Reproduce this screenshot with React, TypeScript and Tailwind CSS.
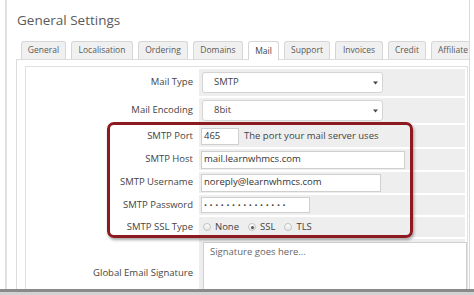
import React from "react";

type Tab = { label: string; w: string; active?: boolean };

const TABS: Tab[] = [
  { label: "General", w: "w-[45px]" },
  { label: "Localisation", w: "w-[62px]" },
  { label: "Ordering", w: "w-[50px]" },
  { label: "Domains", w: "w-[50px]" },
  { label: "Mail", w: "w-[31px]", active: true },
  { label: "Support", w: "w-[46px]" },
  { label: "Invoices", w: "w-[48px]" },
  { label: "Credit", w: "w-[38px]" },
  { label: "Affiliate", w: "w-[44px]" },
];

function Caret() {
  return (
    <svg width="5" height="4" viewBox="0 0 5 4" className="ml-auto mr-[4px]">
      <path d="M0 0.5h5L2.5 3.5z" fill="#444" />
    </svg>
  );
}

function Select({ value }: { value: string }) {
  return (
    <div className="flex h-[21px] w-[181px] items-center rounded-[3px] border border-[#d4d4d4] bg-white pl-[11px] text-[9.5px] text-[#444]">
      <span>{value}</span>
      <Caret />
    </div>
  );
}

function Input({ value, w }: { value: string; w: string }) {
  return (
    <div className={`flex h-[18px] items-center border border-[#cfcfcf] bg-white pl-[2px] text-[9.5px] text-[#333] ${w}`}>
      {value}
    </div>
  );
}

function Radio({ checked }: { checked?: boolean }) {
  return (
    <span className="flex h-[8px] w-[8px] items-center justify-center rounded-full border border-[#c4c4c4] bg-[linear-gradient(#fdfdfd,#e6e6e6)]">
      {checked && <span className="h-[3px] w-[3px] rounded-full bg-[#555]" />}
    </span>
  );
}

function Row({ label, h, children }: { label: string; h: string; children: React.ReactNode }) {
  return (
    <div className={`flex gap-[2px] ${h}`}>
      <div className="flex w-[169px] shrink-0 items-center justify-end bg-white pr-[4px] text-[9.5px] text-[#444]">{label}</div>
      <div className="flex min-w-0 flex-1 items-center bg-[#eeeeee] pl-[3px]">{children}</div>
    </div>
  );
}

export default function App() {
  return (
    <div className="relative h-[295px] w-[474px] overflow-hidden bg-white font-['Open_Sans',sans-serif]">
      <div className="ml-[5px] h-[289px] w-[465px] overflow-hidden border-l-[2px] border-r border-l-[#e0e0e0] border-r-[#dadada]">
        {/* HEADING */}
        <h1 className="pl-[10px] pt-[10px] text-[13.5px] leading-[20px] text-[#5a5a5a]">General Settings</h1>

        {/* TABS */}
        <div className="relative z-10 mt-[11px] flex gap-[5px] pl-[14px]">
          {TABS.map((t) => (
            <div
              key={t.label}
              className={`flex h-[18px] shrink-0 items-center justify-center rounded-t-[3px] border border-b-0 text-[8.5px] ${t.w} ${
                t.active
                  ? "h-[19px] border-[#d6d6d6] bg-white text-[#444]"
                  : "border-[#d6d6d6] bg-[#f0f0f0] text-[#5a5a5a]"
              }`}
            >
              {t.label}
            </div>
          ))}
        </div>

        {/* PANEL */}
        <div className="ml-[9px] -mt-[1px] h-[240px] border-l border-t border-[#dcdcdc] pl-[8px] pr-[1px] pt-[6px]">
          <div className="flex flex-col gap-[2px] border border-[#e0e0e0] p-[2px]">
            <Row label="Mail Type" h="h-[27px]">
              <Select value="SMTP" />
            </Row>
            <Row label="Mail Encoding" h="h-[25px]">
              <Select value="8bit" />
            </Row>
            <Row label="SMTP Port" h="h-[22px]">
              <div className="-ml-[1px] flex h-[17px] w-[38px] items-center border border-[#cfcfcf] bg-white pl-[2px] text-[9.5px] text-[#333]">465</div>
              <span className="ml-[5px] text-[9.5px] text-[#444]">The port your mail server uses</span>
            </Row>
            <Row label="SMTP Host" h="h-[21px]">
              <div className="-ml-[1px]"><Input value="mail.learnwhmcs.com" w="w-[204px]" /></div>
            </Row>
            <Row label="SMTP Username" h="h-[21px]">
              <div className="-ml-[1px]"><Input value="noreply@learnwhmcs.com" w="w-[180px]" /></div>
            </Row>
            <Row label="SMTP Password" h="h-[20px]">
              <div className="-ml-[1px] flex h-[16px] w-[109px] items-center overflow-hidden border border-[#cfcfcf] bg-white pl-[2px] text-[8px] tracking-[2.6px] text-[#444]">
                •••••••••••••••
              </div>
            </Row>
            <Row label="SMTP SSL Type" h="h-[20px]">
              <div className="flex items-center pl-[1px] text-[9.5px] text-[#444]">
                <Radio />
                <span className="ml-[4px] mr-[9px]">None</span>
                <Radio checked />
                <span className="ml-[4px] mr-[9px]">SSL</span>
                <Radio />
                <span className="ml-[4px]">TLS</span>
              </div>
            </Row>
            <div className="flex h-[68px] gap-[2px]">
              <div className="flex w-[169px] shrink-0 items-center justify-end bg-white pr-[4px] text-[9.5px] text-[#444]">Global Email Signature</div>
              <div className="flex min-w-0 flex-1 items-start bg-[#eeeeee] pl-[4px] pt-[3px]">
                <div className="h-[70px] w-[264px] shrink-0 border border-[#d0d0d0] bg-white pl-[6px] pt-[2px] text-[9.5px] text-[#666]">
                  Signature goes here...
                </div>
              </div>
            </div>
          </div>
        </div>
      </div>
      <div className="h-[3px] bg-[#8a8a8a]" />
      <div className="h-[3px] bg-[#d2d2d2]" />

      {/* annotation highlight */}
      <div className="absolute left-[107px] top-[122px] h-[116px] w-[306px] rounded-[7px] border-[3px] border-[#8c1a1f] shadow-[1px_2px_3px_rgba(0,0,0,0.35)]" />
    </div>
  );
}
